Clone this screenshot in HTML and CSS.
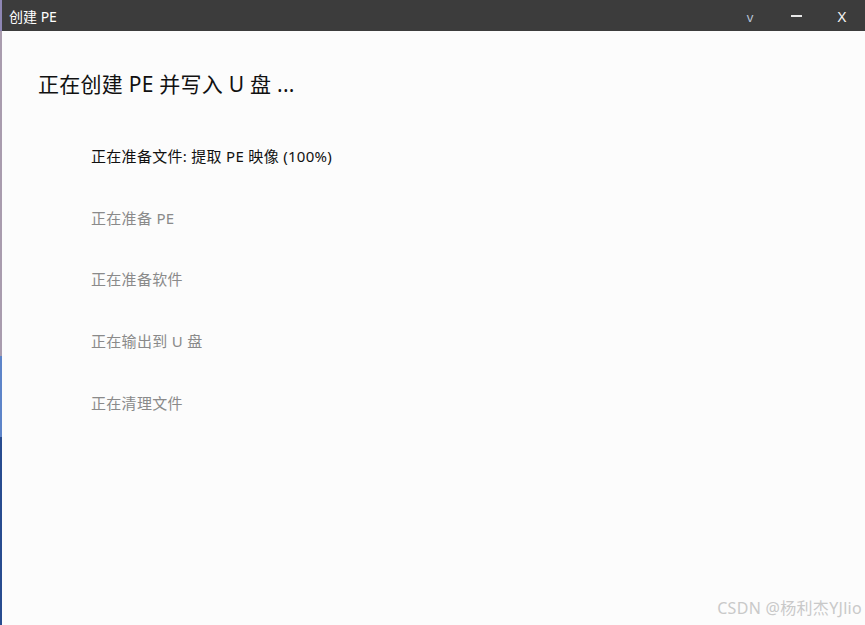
FILE: index.html
```html
<!DOCTYPE html>
<html lang="zh-CN">
<head>
  <meta charset="UTF-8" />
  <meta name="viewport" content="width=device-width, initial-scale=1.0" />
  <title>创建 PE</title>
  <link rel="stylesheet" href="styles.css">
</head>
<body>
  <div class="desktop-edge"></div>
  <div class="window">
    <div class="titlebar">
      <span class="title">创建 PE</span>
      <div class="controls">
        <span class="ctrl ctrl-collapse">v</span>
        <span class="ctrl ctrl-min"><span class="dash"></span></span>
        <span class="ctrl ctrl-close">X</span>
      </div>
    </div>
    <div class="content">
      <h2 class="heading">正在创建 PE 并写入 U 盘 ...</h2>
      <ul class="steps">
        <li class="step active">正在准备文件: 提取 PE 映像 (100%)</li>
        <li class="step">正在准备 PE</li>
        <li class="step">正在准备软件</li>
        <li class="step">正在输出到 U 盘</li>
        <li class="step">正在清理文件</li>
      </ul>
    </div>
  </div>
  <div class="watermark">CSDN @杨利杰YJlio</div>
</body>
</html>
```

FILE: styles.css
```css
html, body {
  height: 100%;
}
body {
  margin: 0;
  display: flex;
  font-family: "Noto Sans", "Noto Sans CJK SC", sans-serif;
  background-color: #fcfcfc;
  overflow: hidden;
}
.desktop-edge {
  width: 2px;
  flex-shrink: 0;
  background: linear-gradient(to bottom,
    #8e86b4 0, #8e86b4 31px,
    #a99cae 31px, #a99cae 356px,
    #5d84c9 356px, #5d84c9 437px,
    #284c90 437px, #284c90 100%);
}
.window {
  flex: 1;
  display: flex;
  flex-direction: column;
}
.titlebar {
  height: 31px;
  background-color: #3c3c3c;
  display: flex;
  align-items: center;
  justify-content: space-between;
  color: #fff;
}
.title {
  padding-left: 7px;
  font-size: 14px;
}
.controls {
  display: flex;
  align-items: center;
  height: 100%;
}
.ctrl {
  width: 46px;
  height: 100%;
  display: flex;
  align-items: center;
  justify-content: center;
}
.ctrl-collapse {
  font-size: 13px;
  color: #b8c4d8;
  padding-top: 2px;
}
.dash {
  width: 11px;
  height: 2px;
  background-color: #e8e8e8;
}
.ctrl-close {
  font-size: 15px;
  color: #f4f4f4;
}
.content {
  flex: 1;
  padding: 38px 0 0 36px;
}
.heading {
  margin: 0;
  font-size: 21px;
  font-weight: 400;
  line-height: 30px;
  letter-spacing: 0.25px;
  color: #111;
}
.steps {
  list-style: none;
  margin: 47px 0 0;
  padding: 0 0 0 53px;
  display: flex;
  flex-direction: column;
  gap: 41.7px;
}
.step {
  font-size: 15px;
  line-height: 20px;
  letter-spacing: 0.3px;
  color: #8a8a8a;
}
.step.active {
  color: #111;
}
.watermark {
  position: absolute;
  right: 3px;
  bottom: 6px;
  font-size: 16px;
  letter-spacing: 0.3px;
  color: #c9c9c9;
}
```
